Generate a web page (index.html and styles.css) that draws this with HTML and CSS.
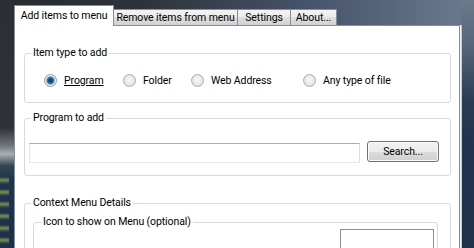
FILE: index.html
```html
<!DOCTYPE html>
<html lang="en">
<head>
<meta charset="utf-8">
<title>Add items to menu</title>
<link rel="stylesheet" href="styles.css">
</head>
<body>
<div class="window">
  <div class="tabs">
    <div class="tab active tab-add">Add items to menu</div>
    <div class="tab tab-remove">Remove items from menu</div>
    <div class="tab tab-settings">Settings</div>
    <div class="tab tab-about">About...</div>
  </div>
  <div class="panel">
    <fieldset class="group group-type">
      <legend>Item type to add</legend>
      <div class="radios">
        <label class="radio-item w-program"><span class="radio checked"></span><span class="focused">Program</span></label>
        <label class="radio-item w-folder"><span class="radio"></span><span>Folder</span></label>
        <label class="radio-item w-web"><span class="radio"></span><span>Web Address</span></label>
        <label class="radio-item"><span class="radio"></span><span>Any type of file</span></label>
      </div>
    </fieldset>
    <fieldset class="group group-program">
      <legend>Program to add</legend>
      <div class="file-row">
        <div class="textbox"></div>
        <div class="button">Search...</div>
      </div>
    </fieldset>
    <fieldset class="group group-context">
      <legend>Context Menu Details</legend>
      <fieldset class="group group-icon">
        <legend class="legend-inner">Icon to show on Menu (optional)</legend>
        <div class="icon-preview"></div>
      </fieldset>
    </fieldset>
  </div>
</div>
</body>
</html>
```
FILE: styles.css
```css
html, body {
  margin: 0;
  height: 100%;
}
body {
  width: 474px;
  height: 248px;
  overflow: hidden;
  font-family: Roboto, "Liberation Sans", sans-serif;
  font-size: 10.5px;
  letter-spacing: -0.1px;
  color: #000;
  background:
    repeating-linear-gradient(to bottom, rgba(30,52,80,0) 0, rgba(30,52,80,0) 5px, rgba(150,178,60,0.75) 8px, rgba(30,52,80,0) 12px) left 172px / 9px 76px no-repeat,
    linear-gradient(to bottom, #2b2f34 0, #2f3337 128px, #70777b 146px, #aab0b3 154px, #34444f 166px, #1e3350 180px, #1d314c 100%) left top / 14px 100% no-repeat,
    linear-gradient(to bottom, #6b7b8d 0, #56667b 45px, #2a3d55 100px, #213550 140px, #1f324c 100%) right top / 13px 100% no-repeat,
    linear-gradient(to right, #272b30 0, #2d3339 30%, #46536a 65%, #6b7b8f 100%);
}
.window {
  display: flex;
  flex-direction: column;
  height: 100%;
  box-sizing: border-box;
  padding: 5px 0 0 14px;
}
.tabs {
  display: flex;
  align-items: flex-end;
  height: 21px;
  margin-bottom: -1px;
  position: relative;
  z-index: 1;
}
.tab {
  height: 16px;
  box-sizing: border-box;
  margin: 0 0 1px -1px;
  padding: 1px 0 0;
  border: 1px solid #898c95;
  border-bottom: none;
  line-height: 13px;
  text-align: center;
  white-space: nowrap;
  background: linear-gradient(#f3f3f3, #ebebeb 50%, #dedede 50%, #d2d2d2);
}
.tab.active {
  height: 21px;
  margin: 0;
  padding: 3px 0 0;
  background: #fff;
  z-index: 2;
}
.tab-add { width: 100px; }
.tab-remove { width: 125px; }
.tab-settings { width: 54px; }
.tab-about { width: 47px; }
.panel {
  flex: 1;
  width: 446px;
  box-sizing: border-box;
  padding: 20px 8px 0 9px;
  background: #fff;
  border: 1px solid #898c95;
  box-shadow: 1px 0 0 #eef1f4, 2px 0 0 #c3cad2;
}
.group {
  margin: 0;
  padding: 0;
  min-width: 0;
  border: 1px solid #d5dadf;
  border-radius: 3px;
}
.group legend {
  margin-left: 6px;
  padding: 0 2px;
  line-height: 14px;
}
.group .legend-inner {
  margin-left: 7px;
}
.radios {
  display: flex;
  align-items: center;
  height: 16px;
  margin: 12px 0 14px 19px;
}
.radio-item {
  display: flex;
  align-items: center;
  gap: 7px;
  white-space: nowrap;
}
.w-program { width: 79px; }
.w-folder { width: 68px; }
.w-web { width: 112px; }
.radio {
  width: 13px;
  height: 13px;
  flex: none;
  box-sizing: border-box;
  border: 1px solid #a9abad;
  border-radius: 50%;
  background: radial-gradient(circle at 50% 45%, #f7f7f7 0, #ebebeb 45%, #d6d6d6 100%);
}
.radio.checked {
  border-color: #8c99a3;
  background: radial-gradient(circle at 50% 50%, #163a5c 0, #1d5079 2px, #3f8db7 3.5px, #bfe0ee 4.5px, #eef2f4 5px, #d9dcde 100%);
}
.focused {
  text-decoration: underline;
}
.group-program {
  margin-top: 8px;
}
.file-row {
  display: flex;
  gap: 7px;
  height: 22px;
  margin: 16px 0 12px 4px;
}
.textbox {
  width: 331px;
  height: 20px;
  align-self: flex-end;
  box-sizing: border-box;
  border: 1px solid;
  border-color: #abadb3 #dbdfe6 #e3e9ef #e2e3ea;
  background: #fff;
}
.button {
  width: 72px;
  height: 21px;
  box-sizing: border-box;
  border: 1px solid #707070;
  border-radius: 3px;
  background: linear-gradient(#f2f2f2, #ebebeb 50%, #dddddd 50%, #cfcfcf);
  box-shadow: inset 0 0 0 1px #fbfbfb;
  text-align: center;
  line-height: 19px;
}
.group-context {
  margin-top: 20px;
}
.group-icon {
  margin: 5px 12px 0 8px;
}
.icon-preview {
  width: 94px;
  height: 40px;
  margin: 0 3px 0 auto;
  box-sizing: border-box;
  border: 1px solid #8d8d8d;
  background: #fff;
}
```
